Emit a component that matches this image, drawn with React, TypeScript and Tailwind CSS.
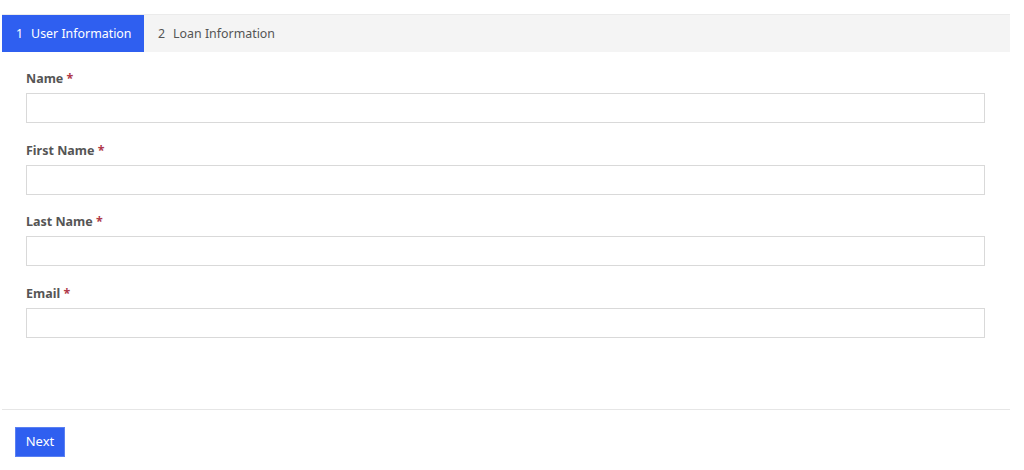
import React from "react";

const fields = ["Name", "First Name", "Last Name", "Email"];

export default function App() {
  return (
    <div
      className="w-[1024px] h-[470px] bg-white overflow-hidden"
      style={{ fontFamily: '"Segoe UI", "Noto Sans", "Open Sans", sans-serif' }}
    >
      <div className="ml-[2px] w-[1008px] pt-[14px]">
        <div className="flex h-[38px] bg-[#f4f4f4] border-t border-[#ebebeb]">
          <div className="flex items-center w-[142px] bg-[#2f5ff0] text-white text-[12.4px] pl-[14px] pt-[2px]">
            <span>1</span>
            <span className="ml-[8px]">User Information</span>
          </div>
          <div className="flex items-center text-[#555] text-[12.4px] pl-[14px] pt-[2px]">
            <span>2</span>
            <span className="ml-[8px]">Loan Information</span>
          </div>
        </div>
        <div className="px-[24px] pt-[19px] h-[357px]">
          {fields.map((f) => (
            <div key={f} className="mb-[19.5px]">
              <div className="h-[16px] leading-[16px] text-[12.5px] font-bold text-[#555] mb-[6px]">
                {f} <span className="text-[#b03a4a]">*</span>
              </div>
              <div className="h-[30px] mr-[1px] border border-[#d9d9d9] bg-white" />
            </div>
          ))}
        </div>
        <div className="border-t border-[#e6e6e6] pt-[17px] pl-[13px]">
          <button className="w-[50px] h-[30px] bg-[#2f5ff0] text-white text-[13px] border border-[#5a80f2]">
            Next
          </button>
        </div>
      </div>
    </div>
  );
}
